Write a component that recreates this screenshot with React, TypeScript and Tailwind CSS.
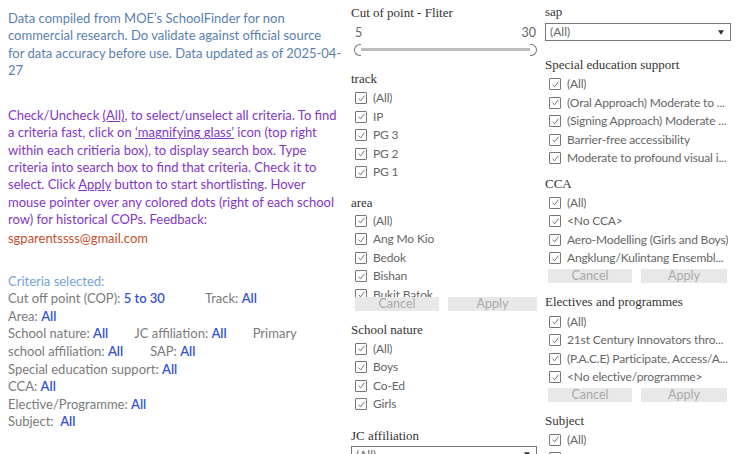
import React from 'react';

const sans = { fontFamily: 'Lato, "Liberation Sans", sans-serif' };

function Header({ children, className = '' }: { children: React.ReactNode; className?: string }) {
  return (
    <div className={`font-['Liberation_Serif',serif] text-[13px] leading-4 text-[#333] ${className}`}>
      {children}
    </div>
  );
}

function CheckItem({ label }: { label: string }) {
  return (
    <div className="flex h-[18.5px] items-center gap-[6px] whitespace-nowrap">
      <div className="flex h-[12px] w-[12px] shrink-0 items-center justify-center rounded-[1px] border border-[#777] bg-white">
        <svg viewBox="0 0 10 10" className="h-[9px] w-[9px]">
          <path d="M1.8 5.2 L4 7.6 L8.4 1.8" fill="none" stroke="#666" strokeWidth="1" />
        </svg>
      </div>
      <span className="overflow-hidden text-[12px] tracking-[-0.15px] text-[#666]">{label}</span>
    </div>
  );
}

function Buttons() {
  return (
    <div className="flex gap-[9px] pr-[4px] text-[12.5px] leading-[14px] text-[#aaa]">
      <div className="flex h-[14px] w-[84px] items-center justify-center bg-[#e8e8e8]">Cancel</div>
      <div className="flex h-[14px] flex-1 items-center justify-center bg-[#e8e8e8]">Apply</div>
    </div>
  );
}

function Dropdown() {
  return (
    <div className="flex h-[18px] items-center justify-between border border-[#777] bg-white pl-[4px] pr-[6px]">
      <span className="text-[12px] text-[#666]">(All)</span>
      <svg viewBox="0 0 8 6" className="h-[5px] w-[6px]">
        <path d="M0 0 L8 0 L4 6 Z" fill="#333" />
      </svg>
    </div>
  );
}

function All({ children = 'All' }: { children?: string }) {
  return <span className="font-semibold text-[#3451d9]">{children}</span>;
}

export default function App() {
  return (
    <div className="flex h-[454px] w-[736px] overflow-hidden bg-white" style={sans}>
      {/* left: notes + criteria summary */}
      <div className="w-[340px] shrink-0 pl-[8px] pt-[10px] text-[13px] leading-[17.3px]">
        <p className="whitespace-nowrap text-[#5a7fae]">
          Data compiled from MOE’s SchoolFinder for non
          <br />
          commercial research. Do validate against official source
          <br />
          for data accuracy before use. Data updated as of 2025-04-
          <br />
          27
        </p>
        <p className="mt-[28px] whitespace-nowrap text-[#8237c4]">
          Check/Uncheck <span className="underline">(All)</span>, to select/unselect all criteria. To find
          <br />
          a criteria fast, click on <span className="underline">‘magnifying glass’</span> icon (top right
          <br />
          within each critieria box), to display search box. Type
          <br />
          criteria into search box to find that criteria. Check it to
          <br />
          select. Click <span className="underline">Apply</span> button to start shortlisting. Hover
          <br />
          mouse pointer over any colored dots (right of each school
          <br />
          row) for historical COPs. Feedback:
        </p>
        <p className="mt-[2px] text-[#c4502c]">sgparentssss@gmail.com</p>
        <div className="mt-[25px] leading-[17.6px] text-[#7a7a7a]">
          <div className="text-[#77a3d3]">Criteria selected:</div>
          <div>
            Cut off point (COP): <All>5 to 30</All>
            <span className="ml-[40px]">Track: </span>
            <All />
          </div>
          <div>
            Area: <All />
          </div>
          <div>
            School nature: <All />
            <span className="ml-[26px]">JC affiliation: </span>
            <All />
            <span className="ml-[26px]">Primary</span>
          </div>
          <div>
            school affiliation: <All />
            <span className="ml-[27px]">SAP: </span>
            <All />
          </div>
          <div>
            Special education support: <All />
          </div>
          <div>
            CCA: <All />
          </div>
          <div>
            Elective/Programme: <All />
          </div>
          <div>
            Subject:&nbsp; <All />
          </div>
        </div>
      </div>

      {/* middle filters */}
      <div className="w-[201px] shrink-0 pl-[11px] pt-[5px]">
        <Header>Cut of point - Fliter</Header>
        <div className="mt-[4px] flex justify-between pl-[4px] pr-[5px] text-[12.5px] leading-4 text-[#666]">
          <span>5</span>
          <span>30</span>
        </div>
        <div className="mt-[2px] flex h-[13px] items-center pl-[3px] pr-[4px]">
          <div className="h-[12px] w-[7px] rounded-l-full border border-r-0 border-[#777] bg-white" />
          <div className="h-[3px] flex-1 bg-[#bdbdbd]" />
          <div className="h-[12px] w-[7px] rounded-r-full border border-l-0 border-[#777] bg-white" />
        </div>
        <Header className="mt-[15px]">track</Header>
        <div className="mt-[2px] pl-[4px]">
          {['(All)', 'IP', 'PG 3', 'PG 2', 'PG 1'].map((t) => (
            <CheckItem key={t} label={t} />
          ))}
        </div>
        <Header className="mt-[13px]">area</Header>
        <div className="mt-[1px] h-[85px] overflow-hidden pl-[4px]">
          {['(All)', 'Ang Mo Kio', 'Bedok', 'Bishan', 'Bukit Batok', 'Bukit Merah'].map((t) => (
            <CheckItem key={t} label={t} />
          ))}
        </div>
        <div className="pl-[4px]">
          <Buttons />
        </div>
        <Header className="mt-[11px]">School nature</Header>
        <div className="mt-[2px] pl-[4px]">
          {['(All)', 'Boys', 'Co-Ed', 'Girls'].map((t) => (
            <CheckItem key={t} label={t} />
          ))}
        </div>
        <Header className="mt-[14px]">JC affiliation</Header>
        <div className="mt-[2px] pr-[4px]">
          <Dropdown />
        </div>
      </div>

      {/* right filters */}
      <div className="min-w-0 flex-1 pl-[4px] pr-[5px] pt-[4px]">
        <Header>sap</Header>
        <div className="mt-[3px]">
          <Dropdown />
        </div>
        <Header className="mt-[16px]">Special education support</Header>
        <div className="mt-[2px] pl-[4px]">
          {[
            '(All)',
            '(Oral Approach) Moderate to ...',
            '(Signing Approach) Moderate ...',
            'Barrier-free accessibility',
            'Moderate to profound visual i...',
          ].map((t) => (
            <CheckItem key={t} label={t} />
          ))}
        </div>
        <Header className="mt-[8px]">CCA</Header>
        <div className="mt-[2px] pl-[4px]">
          {['(All)', '<No CCA>', 'Aero-Modelling (Girls and Boys)', 'Angklung/Kulintang Ensembl...'].map((t) => (
            <CheckItem key={t} label={t} />
          ))}
        </div>
        <div className="mt-[1px] pl-[3px]">
          <Buttons />
        </div>
        <Header className="mt-[11px]">Electives and programmes</Header>
        <div className="mt-[3px] pl-[4px]">
          {[
            '(All)',
            '21st Century Innovators thro...',
            '(P.A.C.E) Participate, Access/A...',
            '<No elective/programme>',
          ].map((t) => (
            <CheckItem key={t} label={t} />
          ))}
        </div>
        <div className="mt-[1px] pl-[3px]">
          <Buttons />
        </div>
        <Header className="mt-[11px]">Subject</Header>
        <div className="mt-[2px] pl-[4px]">
          <CheckItem label="(All)" />
          <CheckItem label="" />
        </div>
      </div>
    </div>
  );
}
